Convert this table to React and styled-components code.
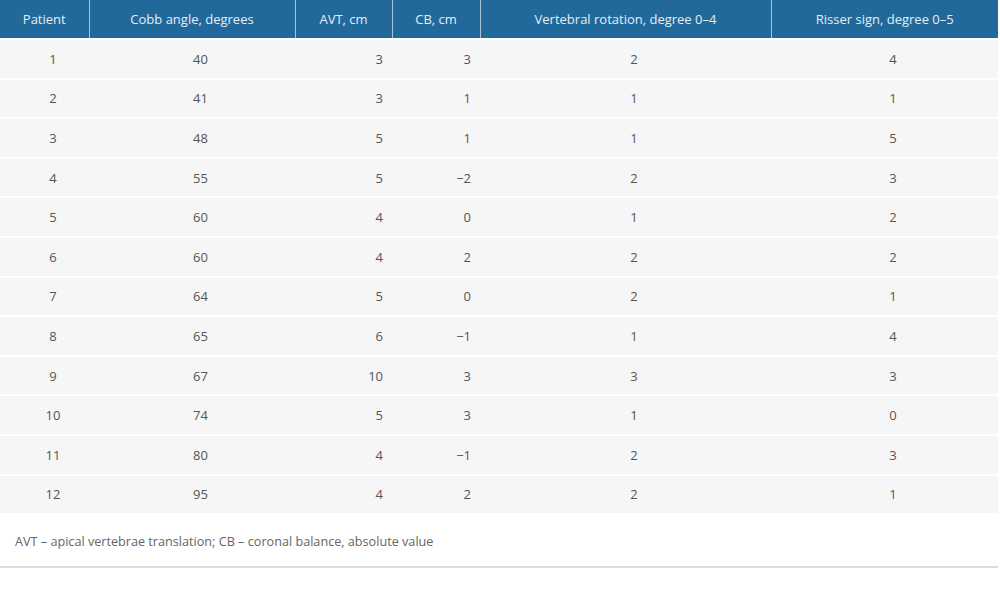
import React from "react";
import styled, { createGlobalStyle } from "styled-components";

const Global = createGlobalStyle`
    body {
        margin : 0;
        background : white;
        font-family : "Open Sans", "Liberation Sans", sans-serif;
    }
`;

const Wrap = styled.div`
    width : 998px;
    border-bottom : solid 2px #dcdcdc;
`;

const Table = styled.table`
    width : 100%;
    border-collapse : collapse;
    table-layout : fixed;
    font-size : 13px;
`;

const Th = styled.th`
    background : #22699b;
    color : #e4edf4;
    font-weight : 400;
    height : 38px;
    padding : 0 8px;
    text-align : center;
    border-left : solid 1px #a9c3d6;
    border-bottom : solid 1px #a9c3d6;
    &:first-child {
        border-left : none;
    }
`;

const Td = styled.td`
    background : #f6f6f6;
    color : #555555;
    height : 37.6px;
    padding : ${props => (props.right ? "0 9px" : "0 0 0 17px")};
    border-top : solid 2px white;
    text-align : ${props => (props.right ? "right" : "center")};
`;

const Note = styled.div`
    padding : 19px 15px 16px;
    font-size : 12.65px;
    color : #666666;
    line-height : 18px;
`;

const rows = [
    [1, 40, 3, "3", 2, 4],
    [2, 41, 3, "1", 1, 1],
    [3, 48, 5, "1", 1, 5],
    [4, 55, 5, "−2", 2, 3],
    [5, 60, 4, "0", 1, 2],
    [6, 60, 4, "2", 2, 2],
    [7, 64, 5, "0", 2, 1],
    [8, 65, 6, "−1", 1, 4],
    [9, 67, 10, "3", 3, 3],
    [10, 74, 5, "3", 1, 0],
    [11, 80, 4, "−1", 2, 3],
    [12, 95, 4, "2", 2, 1],
];

const widths = [89, 206, 97, 88, 291, 227];

export default function App() {
    return (
        <Wrap>
            <Global />
            <Table>
                <colgroup>
                    {widths.map((w, i) => <col key={i} style={{ width: w }} />)}
                </colgroup>
                <thead>
                    <tr>
                        <Th>Patient</Th>
                        <Th>Cobb angle, degrees</Th>
                        <Th>AVT, cm</Th>
                        <Th>CB, cm</Th>
                        <Th>Vertebral rotation, degree 0–4</Th>
                        <Th>Risser sign, degree 0–5</Th>
                    </tr>
                </thead>
                <tbody>
                    {rows.map((r, i) => (
                        <tr key={i}>
                            <Td>{r[0]}</Td>
                            <Td>{r[1]}</Td>
                            <Td right>{r[2]}</Td>
                            <Td right>{r[3]}</Td>
                            <Td>{r[4]}</Td>
                            <Td>{r[5]}</Td>
                        </tr>
                    ))}
                </tbody>
            </Table>
            <Note>AVT – apical vertebrae translation; CB – coronal balance, absolute value</Note>
        </Wrap>
    );
}
